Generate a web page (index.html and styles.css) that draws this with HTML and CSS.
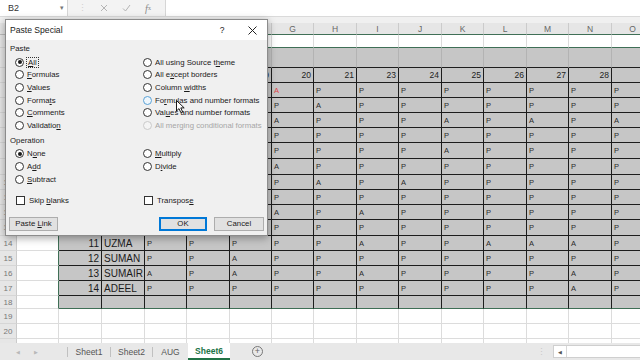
FILE: index.html
```html
<!DOCTYPE html>
<html lang="en">
<head>
	<meta charset="UTF-8">
	<meta name="viewport" content="width=device-width, initial-scale=1.0">
	<title>Paste Special</title>
	<link rel="stylesheet" href="styles.css">
</head>
<body>
	<div class="formula-bar">
		<div class="name-box"><span>B2</span><span class="caret">&#9662;</span></div>
		<div class="fx-tools">
			<span class="tool grip">&#8942;</span>
			<span class="tool">
				<svg width="8" height="8" viewBox="0 0 8 8"><path d="M1 1L7 7M7 1L1 7" stroke="#b4b4b4" stroke-width="1"/></svg>
			</span>
			<span class="tool">
				<svg width="9" height="8" viewBox="0 0 9 8"><path d="M1 4.5L3.5 7L8 1" stroke="#b4b4b4" stroke-width="1" fill="none"/></svg>
			</span>
			<span class="tool fx"><i>f</i><sub>x</sub></span>
		</div>
		<div class="formula-input"></div>
	</div>

	<div class="sheet" id="sheet"></div>

	<div class="tab-bar">
		<div class="tab-nav"><span>&#9664;</span><span>&#9654;</span></div>
		<span class="tab-sep"></span>
		<div class="tab w43">Sheet1</div>
		<span class="tab-sep"></span>
		<div class="tab w42">Sheet2</div>
		<span class="tab-sep"></span>
		<div class="tab w35">AUG</div>
		<div class="tab w42 active">Sheet6</div>
		<div class="add-sheet">+</div>
		<div class="hscroll">
			<span class="grip-h">&#8942;</span>
			<div class="scroll-box"><span class="scroll-arrow">&#9664;</span></div>
		</div>
	</div>

	<div class="dialog">
		<div class="dlg-title">
			<span class="title">Paste Special</span>
			<span class="dlg-help">?</span>
			<span class="dlg-close">
				<svg width="9" height="9" viewBox="0 0 9 9"><path d="M0.5 0.5L8.5 8.5M8.5 0.5L0.5 8.5" stroke="#222" stroke-width="1"/></svg>
			</span>
		</div>
		<div class="dlg-body">
			<div class="group-label">Paste</div>
			<div class="options">
				<div class="opt"><span class="radio on"></span><span class="focus"><u>A</u>ll</span></div>
				<div class="opt"><span class="radio"></span><span>All using Source t<u>h</u>eme</span></div>
				<div class="opt"><span class="radio"></span><span><u>F</u>ormulas</span></div>
				<div class="opt"><span class="radio"></span><span>All e<u>x</u>cept borders</span></div>
				<div class="opt"><span class="radio"></span><span><u>V</u>alues</span></div>
				<div class="opt"><span class="radio"></span><span>Column <u>w</u>idths</span></div>
				<div class="opt"><span class="radio"></span><span>Forma<u>t</u>s</span></div>
				<div class="opt"><span class="radio hover"></span><span>Fo<u>r</u>mulas and number formats</span></div>
				<div class="opt"><span class="radio"></span><span><u>C</u>omments</span></div>
				<div class="opt"><span class="radio"></span><span>Val<u>u</u>es and number formats</span></div>
				<div class="opt"><span class="radio"></span><span>Validatio<u>n</u></span></div>
				<div class="opt disabled"><span class="radio"></span><span>All merging conditional formats</span></div>
			</div>

			<div class="group-label op-label">Operation</div>
			<div class="options">
				<div class="opt"><span class="radio on"></span><span>N<u>o</u>ne</span></div>
				<div class="opt"><span class="radio"></span><span><u>M</u>ultiply</span></div>
				<div class="opt"><span class="radio"></span><span>A<u>d</u>d</span></div>
				<div class="opt"><span class="radio"></span><span>D<u>i</u>vide</span></div>
				<div class="opt"><span class="radio"></span><span><u>S</u>ubtract</span></div>
				<div></div>
			</div>

			<div class="options checks">
				<div class="opt"><span class="check"></span><span>Skip <u>b</u>lanks</span></div>
				<div class="opt"><span class="check"></span><span>Transpos<u>e</u></span></div>
			</div>

			<div class="buttons">
				<button class="btn w49">Paste <u>L</u>ink</button>
				<button class="btn w48 default">OK</button>
				<button class="btn w50">Cancel</button>
			</div>
		</div>
	</div>

	<svg class="cursor" width="10" height="14" viewBox="0 0 10 14">
		<path d="M0.5 0.5V11L3 8.6L4.8 12.6L6.6 11.8L4.8 7.9H8.2Z" fill="#fff" stroke="#000" stroke-width="0.9" stroke-linejoin="round"/>
	</svg>

	<script>
		const letters = "ABCDEFGHIJKLMNO";
		// header of row 3, indexed by grid column (0 = row numbers)
		const days = ["", "", "", "", 17, 18, 19, 20, 21, 23, 24, 25, 26, 27, 28, 30];

		// attendance for columns D..O
		const students = [
			["AHMED", "PPPAPPPPPPPP"],
			["BILAL", "PPPPAPPPPPPP"],
			["FAIZA", "PAPAPPPAPAPA"],
			["HAMZA", "PPPPPPPPPPPP"],
			["NIDA", "PPPPPPPAPPPP"],
			["SANA", "APPAPPPPPPPP"],
			["ASIF", "PPPPAPAPPPPP"],
			["HINA", "PPPPPPPPPPPP"],
			["KAMRAN", "PPAAPAPPPPPP"],
			["RABIA", "PPPPPPPPPPPP"],
			["UZMA", "PPPPPAPPAAAP"],
			["SUMAN", "PPAPPPPPPPPP"],
			["SUMAIR", "APAPPAPPPPAP"],
			["ADEEL", "PPPPPPPPPPAP"]
		];

		const sheet = document.getElementById("sheet");

		for (let r = 0; r <= 21; r++) {
			for (let c = 0; c <= 15; c++) {
				const cell = document.createElement("div");
				cell.className = "cell";

				if (r === 0 && c === 0) {
					cell.classList.add("corner");
				} else if (r === 0) {
					cell.classList.add("col-head");
					if (c >= 2) cell.classList.add("active");
					cell.textContent = letters[c - 1];
				} else if (c === 0) {
					cell.classList.add("row-head");
					cell.textContent = r;
				} else {
					if (c >= 2 && r >= 2 && r <= 18) cell.classList.add("sel");
					if (c >= 2 && r === 2) cell.classList.add("boxed-top");
					if (c >= 2 && r >= 3 && r <= 18) cell.classList.add("boxed");
					if (c >= 2 && r === 1) cell.classList.add("sel-top");
					if (c >= 2 && r === 18) cell.classList.add("sel-bottom");
					if (c === 1 && r >= 2 && r <= 18) cell.classList.add("sel-left");

					if (r === 3 && days[c]) {
						cell.classList.add("day");
						cell.textContent = days[c];
					}

					if (r >= 4 && r <= 17) {
						const i = r - 4;
						const student = students[i];
						if (c === 2) {
							cell.classList.add("num");
							cell.textContent = i + 1;
						} else if (c === 3) {
							cell.classList.add("name");
							cell.textContent = student[0];
						} else if (c >= 4) {
							cell.classList.add("mark");
							cell.textContent = student[1][c - 4];
							if (i === 0 && c === 7) cell.classList.add("late");
						}
					}
				}

				sheet.appendChild(cell);
			}
		}
	</script>
</body>
</html>
```

FILE: styles.css
```css
* {
	box-sizing: border-box;
}
body {
	margin: 0;
	width: 640px;
	height: 360px;
	overflow: hidden;
	position: relative;
	background: #f0f0f0;
	font-family: "Liberation Sans", Arial, sans-serif;
	color: #222;
}

/* formula bar */
.formula-bar {
	display: flex;
	height: 17px;
	border-bottom: 1px solid #dadada;
	background: #f3f3f3;
}
.name-box {
	width: 68px;
	background: #fff;
	border-right: 1px solid #d6d6d6;
	display: flex;
	align-items: center;
	justify-content: space-between;
	padding: 0 3px 0 8px;
	font-size: 9px;
	color: #333;
}
.caret {
	font-size: 7px;
	color: #777;
}
.fx-tools {
	width: 97px;
	display: flex;
	align-items: center;
	gap: 8px;
	padding-left: 7px;
}
.tool {
	width: 14px;
	display: flex;
	align-items: center;
	justify-content: center;
	color: #b4b4b4;
	font-size: 9px;
}
.grip {
	color: #d0d0d0;
}
.fx {
	font-family: "Liberation Serif", serif;
	font-size: 10px;
	color: #8a8a8a;
}
.fx sub {
	font-size: 6px;
}
.formula-input {
	flex: 1;
	background: #fff;
	border-left: 1px solid #d6d6d6;
}

/* grid */
.sheet {
	margin-top: 6px;
	height: 320px;
	overflow: hidden;
	background: #fff;
	display: grid;
	grid-template-columns: 17px 42px 43px 43px 42px 43px 42px 42px 43px 42px 43px 42px 43px 42px 43px 42px;
	grid-template-rows: 12px 13px 20px 15px 15px 15px 15px 15px 16px 16px 15px 15px 15px 16px 15px 15px 15px 15px 13px 15px 15px 15px;
}
.cell {
	border-right: 1px solid #dcdcdc;
	border-bottom: 1px solid #dcdcdc;
	display: flex;
	align-items: center;
	overflow: hidden;
	white-space: nowrap;
	padding: 0 2px;
	font-size: 7.5px;
	color: #2a2a2a;
}
.corner,
.col-head {
	background: #e6e6e6;
	border-right-color: #cbcbcb;
	border-bottom-color: #bdbdbd;
	justify-content: center;
	font-size: 8.5px;
	color: #666;
}
.col-head.active {
	border-bottom-color: #3f6f56;
}
.row-head {
	background: #e6e6e6;
	border-right-color: #cbcbcb;
	border-bottom-color: #d6d6d6;
	justify-content: center;
	font-size: 8px;
	color: #777;
	padding: 0;
}
.sel {
	background: #c6c6c6;
	border-right-color: #b3b3b3;
	border-bottom-color: #b3b3b3;
}
.boxed-top {
	border-bottom-color: #1d1d1d;
}
.boxed {
	border-right-color: #1d1d1d;
	border-bottom-color: #1d1d1d;
}
.sel-top {
	border-bottom-color: #3f6f56;
}
.sel-bottom {
	border-bottom-color: #3f6f56;
}
.sel-left {
	border-right-color: #3f6f56;
}
.day {
	justify-content: flex-end;
	font-size: 8.5px;
	color: #222;
}
.num {
	justify-content: flex-end;
	font-size: 10px;
	color: #1a1a1a;
}
.name {
	font-size: 10px;
	color: #1a1a1a;
}
.mark {
	font-size: 7.5px;
}
.late {
	color: #e0474c;
}

/* sheet tabs */
.tab-bar {
	height: 17px;
	display: flex;
	align-items: stretch;
	background: #e8e8e8;
	font-size: 8.5px;
	color: #555;
}
.tab-nav {
	width: 67px;
	display: flex;
	align-items: center;
	gap: 14px;
	padding-left: 16px;
	font-size: 5px;
	color: #b8b8b8;
}
.tab-sep {
	width: 1px;
	height: 10px;
	align-self: center;
	background: #c0c0c0;
}
.tab {
	display: flex;
	align-items: center;
	justify-content: center;
}
.w43 { width: 42px; }
.w42 { width: 41px; }
.w35 { width: 35px; }
.tab.active {
	width: 42px;
	background: #fff;
	color: #217346;
	font-weight: bold;
	border-bottom: 2px solid #217346;
}
.add-sheet {
	width: 11px;
	height: 11px;
	align-self: center;
	margin-left: 22px;
	border: 1px solid #777;
	border-radius: 50%;
	display: flex;
	align-items: center;
	justify-content: center;
	font-size: 9px;
	line-height: 1;
	color: #666;
}
.hscroll {
	margin-left: auto;
	display: flex;
	align-items: center;
}
.grip-h {
	color: #c8c8c8;
	font-size: 9px;
	margin-right: 7px;
}
.scroll-box {
	width: 87px;
	height: 13px;
	background: #fff;
	border: 1px solid #cfcfcf;
	border-right: none;
	display: flex;
	align-items: center;
}
.scroll-arrow {
	width: 13px;
	height: 100%;
	border-right: 1px solid #d8d8d8;
	display: flex;
	align-items: center;
	justify-content: center;
	font-size: 5px;
	color: #555;
}

/* paste special dialog */
.dialog {
	position: absolute;
	left: 5px;
	top: 19px;
	width: 263px;
	height: 217px;
	background: #f0f0f0;
	border: 1px solid #8c8c8c;
	box-shadow: 0 2px 8px rgba(0, 0, 0, 0.35);
	font-size: 7.8px;
	color: #1a1a1a;
}
.dlg-title {
	height: 20px;
	background: #fff;
	display: flex;
	align-items: center;
	padding-left: 4px;
	font-size: 8.6px;
}
.title {
	flex: 1;
}
.dlg-help {
	width: 10px;
	text-align: center;
	margin-right: 15px;
	font-size: 8.5px;
}
.dlg-close {
	width: 20px;
	margin-right: 5px;
	display: flex;
	justify-content: center;
}
.dlg-body {
	padding: 3px 3px 0 4px;
}
.group-label {
	height: 11px;
	line-height: 11px;
}
.op-label {
	margin-top: 3px;
}
.options {
	display: grid;
	grid-template-columns: 128px 1fr;
	grid-auto-rows: 12.6px;
	margin-top: 2px;
	padding-left: 5px;
}
.opt {
	display: flex;
	align-items: center;
	gap: 3px;
	white-space: nowrap;
}
.radio {
	width: 9px;
	height: 9px;
	flex: none;
	border: 1px solid #333;
	border-radius: 50%;
	background: #fff;
	display: flex;
	align-items: center;
	justify-content: center;
}
.radio.on::after {
	content: "";
	width: 4px;
	height: 4px;
	border-radius: 50%;
	background: #1a1a1a;
}
.radio.hover {
	border-color: #5aa2d6;
	background: #eef6fc;
}
.disabled {
	color: #a6a6a6;
}
.disabled .radio {
	border-color: #cacaca;
	background: #f4f4f4;
}
.focus {
	outline: 1px dotted #333;
	padding: 0 1px;
}
.checks {
	margin-top: 9px;
}
.checks .opt {
	gap: 4px;
}
.check {
	width: 9px;
	height: 9px;
	flex: none;
	margin-left: 1px;
	border: 1px solid #333;
	background: #fff;
}
.buttons {
	display: flex;
	gap: 7px;
	margin-top: 10px;
	margin-left: -1px;
}
.btn {
	height: 14px;
	padding: 0;
	background: #e1e1e1;
	border: 1px solid #adadad;
	font-family: inherit;
	font-size: 7.8px;
	color: #1a1a1a;
}
.w49 { width: 49px; }
.w48 { width: 48px; margin-left: auto; }
.w50 { width: 50px; }
.btn.default {
	border-color: #0078d7;
	box-shadow: inset 0 0 0 1px #0078d7;
}

.cursor {
	position: absolute;
	left: 176px;
	top: 100px;
}
```
